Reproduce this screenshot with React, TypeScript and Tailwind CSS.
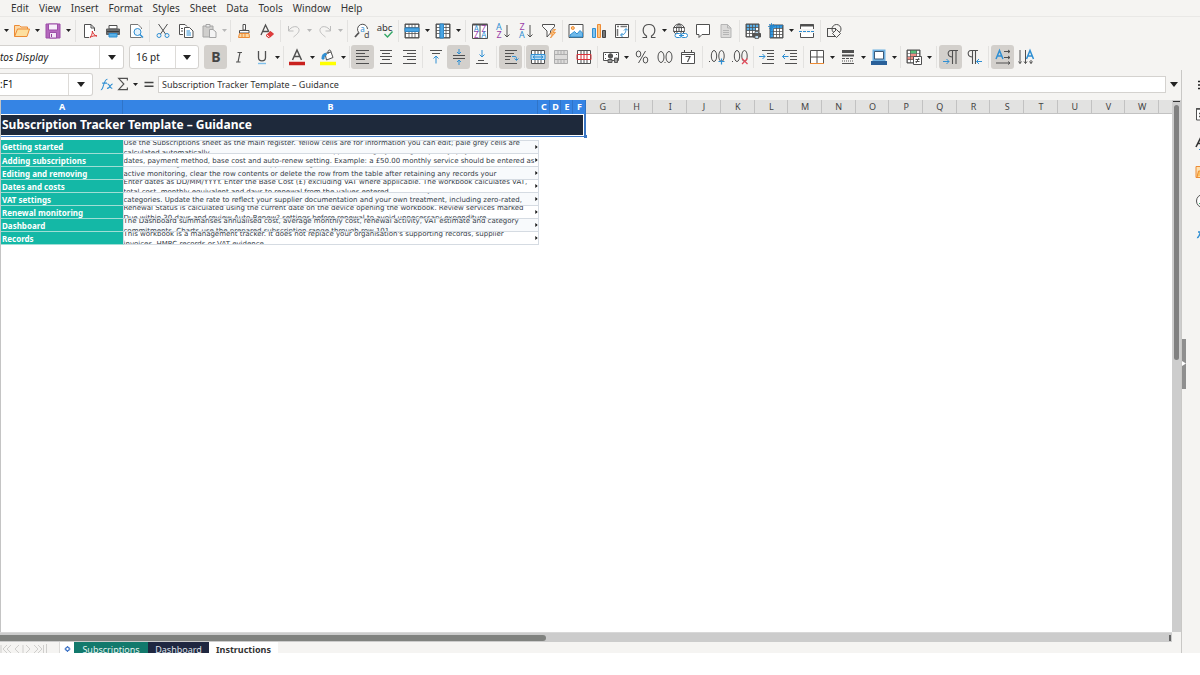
import type { ReactNode } from "react";

const INK = "#505050";
const BLUE = "#2f8fd3";
const ORANGE = "#ed8b34";

function Icon({ children, size = 16 }: { children: ReactNode; size?: number }) {
  return (
    <svg className="overflow-visible" width={size} height={size} viewBox="0 0 16 16" fill="none" stroke={INK} strokeWidth="1" aria-hidden="true">
      {children}
    </svg>
  );
}

function Glyph({ x, y, size, fill, children, weight, family }: { x: number; y: number; size: number; fill: string; children: string; weight?: string; family?: string }) {
  return (
    <text x={x} y={y} fontSize={size} fill={fill} stroke="none" textAnchor="middle" fontWeight={weight} fontFamily={family ?? "Noto Sans, sans-serif"}>
      {children}
    </text>
  );
}

const gridLines = "M1 1.5H15M1 4.5H15M1 7.5H15M1 10.5H15M1 14.5H15M1.5 1V15M5 1V15M8 1V15M11 1V15M14.5 1V15";

const icons: Record<string, ReactNode> = {
  open: (
    <Icon>
      <path d="M.5 13.5V2.5H5.5L7 4H13.5V6" fill="#fbd9a8" stroke={ORANGE} />
      <path d="M.6 13.5 3.5 6H15.5L13 13.5Z" fill="#fddf9f" stroke={ORANGE} />
    </Icon>
  ),
  save: (
    <Icon>
      <path d="M1 1H15V15H1Z" fill="#b468bd" stroke="#9d4fa8" />
      <path d="M3.5 1H12.5V7H3.5Z" fill="#f7effa" stroke="#9d4fa8" />
      <path d="M4.5 9.5H11.5V15H4.5Z" fill="#f4e7f7" stroke="#9d4fa8" />
      <path d="M6.5 11V14" stroke="#8f3d9a" />
    </Icon>
  ),
  pdf: (
    <Icon>
      <path d="M7 14.5H2.5V1.5H9L12.5 5V8" fill="#fff" />
      <path d="M9 1.5V5H12.5" />
      <path d="M8 14.5C10 12 10.5 10 10.3 8C11 11 12.5 12.5 15 13C12.5 12.5 10 13 8 14.5Z" stroke="#dc3232" />
    </Icon>
  ),
  print: (
    <Icon>
      <path d="M4 2.5H12V6H4Z" fill="#fff" />
      <path d="M1.500 6H14.500V11.500H1.500Z" fill="#6b6e71" stroke="#5f5f5f" />
      <path d="M2 8.5H14" stroke="#3b3b3b" />
      <path d="M4 10.5H12V14H4Z" fill="#5bb1e6" stroke={BLUE} />
    </Icon>
  ),
  preview: (
    <Icon>
      <path d="M13.500 14.5H2.500V1.500H10L13.500 5V6" fill="#fff" stroke="#777" />
      <circle cx="9.500" cy="9" r="3.500" fill="#e5f3fc" stroke={BLUE} />
      <path d="M12 11.500 15 14.500" stroke={BLUE} strokeWidth="1.500" />
    </Icon>
  ),
  cut: (
    <Icon>
      <path d="M3.500 1 10.500 11M12.500 1 5.500 11" />
      <circle cx="4" cy="12.500" r="2" stroke={BLUE} />
      <circle cx="12" cy="12.500" r="2" stroke={BLUE} />
    </Icon>
  ),
  copy: (
    <Icon>
      <path d="M5 11.500H1.500V1.500H7L9 3.500" fill="#fff" />
      <path d="M3 5.500H5M3 8H5" />
      <path d="M6.500 4.500H11.500L15 8V14.500H6.500Z" fill="#fff" />
      <path d="M8.500 8H12M8.500 10H13M8.500 12H13" stroke={BLUE} />
    </Icon>
  ),
  paste: (
    <Icon>
      <path d="M2 3H12V14H2Z" fill="#d0cfcd" stroke="#a5a5a5" />
      <path d="M5 1.500H9V4H5Z" fill="#eee" stroke="#a5a5a5" />
      <path d="M8.500 6.500H12L15 9V14.500H8.500Z" fill="#f4f4f4" stroke="#a5a5a5" />
    </Icon>
  ),
  brush: (
    <Icon>
      <path d="M7 1.500H9.500V7H7Z" fill="#fff" />
      <path d="M3.500 7.500H13V10H3.500Z" fill="#fff" />
      <path d="M3.500 10.500H13L13.500 14.500H2.500Z" fill="#fcd9a4" stroke={ORANGE} />
      <path d="M6 11V14M9 11V14" stroke={ORANGE} />
    </Icon>
  ),
  clear: (
    <Icon>
      <path d="M2 12 6.500 2 10 9M3.500 8.500H9" strokeWidth="1.300" />
      <path d="M7 12.500 11.500 8.500 14.500 11 10 15Z" fill="#e23c3c" stroke="#d43030" />
      <path d="M8 12 10.500 14.200" stroke="#fff" />
    </Icon>
  ),
  undo: (
    <Icon>
      <path d="M2.500 3V8H7.500M2.500 8C5 3 12 2 13 6.500C13.500 9.500 10 12 7.500 14" stroke="#bdbdbd" />
    </Icon>
  ),
  redo: (
    <Icon>
      <path d="M13.500 3V8H8.500M13.500 8C11 3 4 2 3 6.500C2.500 9.500 6 12 8.500 14" stroke="#bdbdbd" />
    </Icon>
  ),
  find: (
    <Icon>
      <path d="M5 9.500 1 14" strokeWidth="1.800" />
      <path d="M5 9.800A5 5 0 1 1 13.500 6" fill="#fff" />
      <Glyph x={8.500} y={8.500} size={8} fill={BLUE}>a</Glyph>
      <Glyph x={12.800} y={15} size={9} fill={INK}>d</Glyph>
    </Icon>
  ),
  spell: (
    <Icon>
      <Glyph x={7.500} y={7.500} size={9.500} fill="#333">abc</Glyph>
      <path d="M7.500 11 10.500 14 15.500 8.500" stroke="#32a866" strokeWidth="1.400" />
    </Icon>
  ),
  row: (
    <Icon>
      <path d="M1 1H15V15H1Z" fill="#fff" />
      <path d={gridLines} strokeWidth=".8" />
      <path d="M1 5H15V8.500H1Z" fill="#4ba6e4" stroke="#2e86c6" />
    </Icon>
  ),
  column: (
    <Icon>
      <path d="M1 1H15V15H1Z" fill="#fff" />
      <path d={gridLines} strokeWidth=".8" />
      <path d="M5 1H8.500V15H5Z" fill="#4ba6e4" stroke="#2e86c6" />
    </Icon>
  ),
  sort: (
    <Icon>
      <path d="M.500 1.500H15.500V15.500H.500ZM8 1.500V15.500" fill="#fff" />
      <path d="M.500 1.500H15.500" strokeWidth="2" />
      <Glyph x={4.300} y={8.500} size={8} fill={BLUE}>A</Glyph>
      <Glyph x={4.300} y={15} size={8} fill="#9b3fa8">Z</Glyph>
      <Glyph x={11.800} y={8.500} size={8} fill="#9b3fa8">Z</Glyph>
      <Glyph x={11.800} y={15} size={8} fill={BLUE}>A</Glyph>
    </Icon>
  ),
  az: (
    <Icon>
      <Glyph x={4} y={7} size={9} fill={BLUE}>A</Glyph>
      <Glyph x={4} y={15} size={9} fill="#9b3fa8">Z</Glyph>
      <path d="M12 2V14M9.500 11.500 12 14 14.500 11.500" />
    </Icon>
  ),
  za: (
    <Icon>
      <Glyph x={4} y={7} size={9} fill="#9b3fa8">Z</Glyph>
      <Glyph x={4} y={15} size={9} fill={BLUE}>A</Glyph>
      <path d="M12 2V14M9.500 11.500 12 14 14.500 11.500" />
    </Icon>
  ),
  filter: (
    <Icon>
      <path d="M1.500 1.500H13.500V3.500L9.500 8V10L6 14V8L1.500 3.500Z" fill="#fafafa" />
      <path d="M12.500 6.500 9 11H11.500L9.500 15 14.500 9.500H12L14.500 6.500Z" fill="#fbc583" stroke={ORANGE} strokeWidth=".8" />
    </Icon>
  ),
  image: (
    <Icon>
      <path d="M1 1.500H15V14.500H1Z" fill="#fff" />
      <path d="M2 14V12L6.500 8.500 9 11 12 7.500 14.500 10V14Z" fill="#6fb9ea" stroke={BLUE} />
      <circle cx="4.800" cy="5" r="1.500" fill="#fbc583" stroke={ORANGE} />
    </Icon>
  ),
  chart: (
    <Icon>
      <path d="M1.500 5.500H4.500V14.500H1.500Z" fill="#83c3ee" stroke={BLUE} />
      <path d="M6.500 1.500H9.500V14.500H6.500Z" fill="#fbc583" stroke={ORANGE} />
      <path d="M11.500 7.500H14.500V14.500H11.500Z" fill="#777" stroke="#444" />
    </Icon>
  ),
  pivot: (
    <Icon>
      <path d="M1.500 1.500H14.500V14.500H1.500Z" fill="#fff" />
      <path d="M3 3.500H5M6.500 3.500H13M3.500 6V13" stroke="#777" strokeWidth="1.500" />
      <path d="M7 12C10 12 12 10 12 6M10 7.500 12 5.500 14 7.500M8.500 10 6.500 12 8.500 14" stroke={BLUE} />
    </Icon>
  ),
  omega: (
    <Icon>
      <path d="M1.500 14.500H5.500V13C.5 10 1 1.500 8 1.500S15.500 10 10.500 13V14.500H14.500" strokeWidth="1.200" />
    </Icon>
  ),
  link: (
    <Icon>
      <circle cx="7" cy="6.500" r="5.500" fill="#fff" />
      <ellipse cx="7" cy="6.500" rx="2.500" ry="5.500" />
      <path d="M1.500 4.500H12.500M1.500 8.500H12.500M7 1V9" />
      <rect x="3" y="10.500" width="6.500" height="4" rx="2" fill="#fff" stroke={BLUE} />
      <rect x="9" y="10.500" width="6.500" height="4" rx="2" fill="#fff" stroke={BLUE} />
      <path d="M7 12.500H12" stroke={BLUE} />
    </Icon>
  ),
  comment: (
    <Icon>
      <path d="M1.500 1.500H14.500V11.500H7L4 14.500V11.500H1.500Z" fill="#fff" />
    </Icon>
  ),
  header: (
    <Icon>
      <path d="M3 1.500H9.500L13 5V14.500H3Z" fill="#dcdbda" stroke="#b5b5b5" />
      <path d="M9.500 1.500V5H13M5 7.500H11M5 9.500H11M5 11.500H11" stroke="#b5b5b5" />
    </Icon>
  ),
  printarea: (
    <Icon>
      <path d="M1 1H14V14H1Z" fill="#fff" />
      <path d="M1 1H14V4.500H1ZM1 4.500H11V8H1Z" fill="#5aaee6" stroke="none" />
      <path d="M1 1.500H14M1 4.500H14M1 7.500H14M1 10.500H8M1 13.500H8M1.500 1V14M4.500 1V14M7.500 1V14M10.500 1V10M13.500 1V8" strokeWidth=".8" />
      <path d="M8 10.500H15.500V14H8Z" fill="#555" />
      <path d="M10 8.500H13.500V10.500H10ZM10 12.500H13.500V15.500H10Z" fill="#b9dcf4" strokeWidth=".8" />
    </Icon>
  ),
  freeze: (
    <Icon>
      <path d="M2 2H15V15H2Z" fill="#fff" />
      <path d="M2 2H15V5H5V15H2Z" fill="#379be0" stroke="none" />
      <path d="M5 5.500H15M5 8.500H15M5 11.500H15M2 14.500H15M5.500 5V15M8.500 5V15M11.500 5V15M14.500 2V15" strokeWidth=".8" />
      <path d="M2 2.500H15M2.500 2V15M8.500 2V5M11.500 2V5M2 8.500H5M2 11.500H5" stroke="#2374b4" strokeWidth=".8" />
      <path d="M3.500 0V7M0 3.500H7M1 1 6 6M6 1 1 6" stroke="#2585cc" strokeWidth=".8" />
    </Icon>
  ),
  split: (
    <Icon>
      <path d="M1.500 6V1.500H14.500V6M1.500 10V14.500H14.500V10" fill="#fff" />
      <path d="M1 2.500H15" strokeWidth="2" />
      <path d="M0 8.500H16" stroke={BLUE} strokeDasharray="3 1" />
    </Icon>
  ),
  shapes: (
    <Icon>
      <rect x="1.500" y="5.500" width="8" height="8" />
      <circle cx="10.500" cy="6" r="4.500" />
      <path d="M10.500 6.500 14.500 10.500 10.500 14.500 6.500 10.500Z" fill="#f5f4f2" />
    </Icon>
  ),
  bold: (
    <Icon>
      <Glyph x={8} y={13} size={14} fill="#454545" weight="700">B</Glyph>
    </Icon>
  ),
  italic: (
    <Icon>
      <path d="M6.500 3.500H11M5 13H9.500M9 3.500 7 13" strokeWidth="1.200" />
    </Icon>
  ),
  underline: (
    <Icon>
      <path d="M4.500 2V8.500C4.500 13 11.500 13 11.500 8.500V2" strokeWidth="1.300" />
      <path d="M4 14.500H12" stroke="#7fc0ec" strokeWidth="1.400" />
    </Icon>
  ),
  fontcolor: (
    <Icon>
      <path d="M3.500 11 8 1 12.500 11M5.200 7.500H10.800" strokeWidth="1.500" />
      <path d="M0 14.500H16" stroke="#c9211e" strokeWidth="3.500" />
    </Icon>
  ),
  highlight: (
    <Icon>
      <path d="M5 4.500 11 3 13 8.500 6.500 11Z" fill="#fff" />
      <path d="M8 5V2.500C8.500 .500 11 .500 11 3" />
      <path d="M2 10C2 6 3 4.500 6 4.500L6.500 6C4.500 6.500 4 8 4 10Z" fill={BLUE} stroke={BLUE} />
      <path d="M0 14.500H16" stroke="#ffff00" strokeWidth="3.500" />
    </Icon>
  ),
  left: (
    <Icon>
      <path d="M1 1.500H14M1 4.500H10M1 7.500H14M1 10.500H10M1 14.500H14" />
    </Icon>
  ),
  center: (
    <Icon>
      <path d="M2 1.500H14M4 4.500H12M2 7.500H14M4 10.500H12M2 14.500H14" />
    </Icon>
  ),
  right: (
    <Icon>
      <path d="M2 1.500H15M6 4.500H15M2 7.500H15M6 10.500H15M2 14.500H15" />
    </Icon>
  ),
  vtop: (
    <Icon>
      <path d="M2 1.500H14M4 4.500H12" />
      <path d="M8 14.500V7M5.500 9.500 8 7 10.500 9.500" stroke={BLUE} />
    </Icon>
  ),
  vmid: (
    <Icon>
      <path d="M2 6.500H14M2 9.500H14" />
      <path d="M8 0V5M6 3 8 5 10 3M8 16V11M6 13 8 11 10 13" stroke={BLUE} />
    </Icon>
  ),
  vbottom: (
    <Icon>
      <path d="M2 14.500H14M4 11.500H10" />
      <path d="M8 1V8M5.500 5.500 8 8 10.500 5.500" stroke={BLUE} />
    </Icon>
  ),
  wrap: (
    <Icon>
      <path d="M2 1.500H14M2 4.500H11M2 7.500H8M2 10.500H7M2 14.500H14" />
      <path d="M9 7.500H12C13.500 7.500 13.500 8.500 13.500 11M11.500 9.500 13.500 11.500 15.500 9.500" stroke={BLUE} />
    </Icon>
  ),
  merge: (
    <Icon>
      <path d="M1.500 1.500H14.500V14.500H1.500ZM5 1.500V5M8 1.500V5M11 1.500V5M5 11V14.500M8 11V14.500M11 11V14.500" fill="#fff" />
      <path d="M1 5.500H15V10.500H1Z" fill="#b9dcf4" stroke={BLUE} />
      <path d="M3 8H13M5 6.500 3 8 5 9.500M11 6.500 13 8 11 9.500" stroke={BLUE} />
    </Icon>
  ),
  mergecells: (
    <Icon>
      <path d="M1.500 1.500H14.500V14.500H1.500ZM1.500 5.500H14.500M1.500 10.500H14.500M5 1.500V5M8 1.500V5M11 1.500V5M5 11V14.500M8 11V14.500M11 11V14.500" fill="#dddcdb" stroke="#adadad" />
    </Icon>
  ),
  splitcells: (
    <Icon>
      <path d="M1.500 1.500H14.500V14.500H1.500ZM5 1.500V5M8 1.500V5M11 1.500V5M5 11V14.500M8 11V14.500M11 11V14.500" fill="#fff" />
      <path d="M1 5.500H15V10.500H1ZM5 5.500V10.500M8 5.500V10.500M11 5.500V10.500" stroke="#d8323a" />
    </Icon>
  ),
  currency: (
    <Icon>
      <path d="M.500 3.500H15.500V11.500H.500Z" fill="#fff" />
      <circle cx="7.500" cy="7" r="2.200" fill="#555" />
      <path d="M2 5.500H3M2 9.500H3M13 5.500H14" />
      <path d="M5 10.500H9V13.500H5ZM11.500 9H14.500V13.500H11.500Z" fill="#999" stroke="#555" />
    </Icon>
  ),
  percent: (
    <Icon>
      <ellipse cx="4.500" cy="5" rx="2.300" ry="3" />
      <ellipse cx="11.500" cy="11" rx="2.300" ry="3" />
      <path d="M11.500 2 4.500 14" />
    </Icon>
  ),
  number: (
    <Icon>
      <ellipse cx="4" cy="8" rx="3" ry="5.500" />
      <ellipse cx="12" cy="8" rx="3" ry="5.500" />
      <path d="M7.500 13.500H8.500" />
    </Icon>
  ),
  date: (
    <Icon>
      <path d="M1.500 3.500H14.500V14.500H1.500ZM1.500 5.500H14.500M4.500 1V4M11.500 1V4" fill="#fff" />
      <path d="M5.500 7.500H10L7.500 13" strokeWidth="1.200" />
    </Icon>
  ),
  adddec: (
    <Icon>
      <path d="M0 12.500H1" />
      <ellipse cx="5" cy="7" rx="2.700" ry="5.500" />
      <ellipse cx="12.500" cy="7" rx="2.700" ry="5.500" />
      <path d="M12.500 9.500V15.500M9.500 12.500H15.500" stroke={BLUE} strokeWidth="1.200" />
    </Icon>
  ),
  deldec: (
    <Icon>
      <path d="M0 12.500H1" />
      <ellipse cx="5" cy="7" rx="2.700" ry="5.500" />
      <ellipse cx="12.500" cy="7" rx="2.700" ry="5.500" />
      <path d="M10 9.500 15.500 15M15.500 9.500 10 15" stroke="#e04a5a" strokeWidth="1.200" />
    </Icon>
  ),
  indent: (
    <Icon>
      <path d="M3 1.500H15M8 4.500H15M8 7.500H15M8 10.500H15M3 14.500H15" />
      <path d="M0 7.500H6M3.500 5 6 7.500 3.500 10" stroke={BLUE} />
    </Icon>
  ),
  outdent: (
    <Icon>
      <path d="M3 1.500H15M8 4.500H15M8 7.500H15M8 10.500H15M3 14.500H15" />
      <path d="M.500 7.500H6.500M3 5 .500 7.500 3 10" stroke={BLUE} />
    </Icon>
  ),
  borders: (
    <Icon>
      <path d="M1.500 14.500V1.500H14.500V14.500M8 1.500V14.500M1.500 8H14.500" fill="#fff" />
      <path d="M1 14.500H15" stroke={ORANGE} />
    </Icon>
  ),
  linestyle: (
    <Icon>
      <path d="M2 2.500H14" strokeWidth="3" />
      <path d="M2 6.500H14" strokeWidth="2" />
      <path d="M2 9.500H14" strokeDasharray="3 1" />
      <path d="M2 12H14" strokeDasharray="1 1" />
      <path d="M2 14.500H14" />
    </Icon>
  ),
  bordercolor: (
    <Icon>
      <path d="M2.500 1.500H13.500V11H2.500Z" fill="#fff" stroke="#6fb1e2" strokeWidth="2" />
      <path d="M3.500 2.500H12.500V10H3.500Z" stroke="#3c5a78" />
      <path d="M0 14H16" stroke="#2a6099" strokeWidth="4" />
    </Icon>
  ),
  conditional: (
    <Icon>
      <path d="M1 1H14V14H1Z" fill="#fff" />
      <path d="M4 1H11V4.500H4Z" fill="#57c07a" stroke="none" />
      <path d="M4 5H11V8H4ZM1 8H7V11H1Z" fill="#ef8f86" stroke="none" />
      <path d="M1 1.500H14M1 4.500H14M1 7.500H14M1 10.500H7M1 13.500H7M1.500 1V14M4.500 1V14M10.500 1V7M13.500 1V7" strokeWidth=".6" />
      <path d="M7.500 7.500H15.500V15.500H7.500ZM9.500 10.500H13.500M9.500 12.500H13.500M13 9 10 14" fill="#fff" />
    </Icon>
  ),
  ltr: (
    <Icon>
      <path d="M9.500 15V1.500M13 15V1.500M15 1.500H8C4 1.500 4 8 9.500 8" strokeWidth="1.100" />
      <path d="M0 12.500H6M3.500 10 6 12.500 3.500 15" stroke={BLUE} />
    </Icon>
  ),
  rtl: (
    <Icon>
      <path d="M6.500 15V1.500M9.500 15V1.500M12 1.500H5C1 1.500 1 8 6.500 8" strokeWidth="1.100" />
      <path d="M16 12.500H10.500M13 10 10.500 12.500 13 15" stroke={BLUE} />
    </Icon>
  ),
  horizontal: (
    <Icon>
      <path d="M1 10 4.500 1.500 8 10M2.500 7H6.500" stroke={BLUE} strokeWidth="1.500" />
      <path d="M9 2.500H15M9 8.500H15M1 14H15M13 1 15 2.500 13 4M13 7 15 8.500 13 10M13 12.500 15 14 13 15.500" />
    </Icon>
  ),
  vertical: (
    <Icon>
      <path d="M8.500 10 12 1.500 15.500 10M10 7H14" stroke={BLUE} strokeWidth="1.500" />
      <path d="M2 1V14.500M7.500 1V14.500M13 11V14.500M.500 12.500 2 14.500 3.500 12.500M6 12.500 7.500 14.500 9 12.500M11.500 12.500 13 14.500 14.500 12.500" />
    </Icon>
  ),
};

type Tool = { k: "b"; icon: string; label: string; on?: boolean } | { k: "d"; faint?: boolean; label: string } | { k: "s"; wide?: boolean };
const b = (icon: string, label: string, on?: boolean): Tool => ({ k: "b", icon, label, on });
const d = (label: string, faint?: boolean): Tool => ({ k: "d", label, faint });
const s = (wide?: boolean): Tool => ({ k: "s", wide });

const standardTools: Tool[] = [
  d("New options"), b("open", "Open"), d("Open options"), b("save", "Save"), d("Save options"), s(true),
  b("pdf", "Export as PDF"), b("print", "Print"), b("preview", "Print preview"), s(),
  b("cut", "Cut"), b("copy", "Copy"), b("paste", "Paste"), d("Paste options", true), s(),
  b("brush", "Clone formatting"), b("clear", "Clear formatting"), s(),
  b("undo", "Undo"), d("Undo history", true), b("redo", "Redo"), d("Redo history", true), s(true),
  b("find", "Find and replace"), b("spell", "Spelling"), s(),
  b("row", "Row"), d("Row options"), b("column", "Column"), d("Column options"), s(true),
  b("sort", "Sort"), b("az", "Sort ascending"), b("za", "Sort descending"), b("filter", "AutoFilter"), s(),
  b("image", "Insert image"), b("chart", "Insert chart"), b("pivot", "Pivot table"), s(),
  b("omega", "Special character"), d("Special character options"), b("link", "Hyperlink"), b("comment", "Comment"), b("header", "Headers and footers"), s(),
  b("printarea", "Define print area"), b("freeze", "Freeze rows and columns"), d("Freeze options"), b("split", "Split window"), s(),
  b("shapes", "Draw functions"),
];

const formatTools: Tool[] = [
  b("bold", "Bold", true), b("italic", "Italic"), b("underline", "Underline"), d("Underline options"), s(),
  b("fontcolor", "Font color"), d("Font color options"), b("highlight", "Background color"), d("Background color options"), s(),
  b("left", "Align left", true), b("center", "Align center"), b("right", "Align right"), s(),
  b("vtop", "Align top"), b("vmid", "Center vertically", true), b("vbottom", "Align bottom"), s(true),
  b("wrap", "Wrap text", true), s(),
  b("merge", "Merge and center", true), b("mergecells", "Merge cells"), b("splitcells", "Split cells"), s(),
  b("currency", "Currency"), d("Currency options"), b("percent", "Percent"), b("number", "Number"), b("date", "Date"), s(true),
  b("adddec", "Add decimal place"), b("deldec", "Delete decimal place"), s(),
  b("indent", "Increase indent"), b("outdent", "Decrease indent"), s(),
  b("borders", "Borders"), d("Border options"), b("linestyle", "Border style"), d("Border style options"), b("bordercolor", "Border color"), d("Border color options"), s(),
  b("conditional", "Conditional formatting"), d("Conditional options"), s(true),
  b("ltr", "Left to right", true), b("rtl", "Right to left"), s(true),
  b("horizontal", "Horizontal text", true), b("vertical", "Vertical text"),
];

function Caret({ faint, big }: { faint?: boolean; big?: boolean }) {
  return (
    <svg width={big ? 8 : 5} height={big ? 5 : 3} viewBox="0 0 8 4" preserveAspectRatio="none" fill={faint ? "#b8b8b8" : "#222"} aria-hidden="true">
      <path d="M0 0H8L4 4Z" />
    </svg>
  );
}

function Tools({ items }: { items: Tool[] }) {
  return (
    <div className="flex items-center">
      {items.map((t, i) => {
        if (t.k === "s")
          return (
            <span key={i} className={t.wide ? "flex w-1.5 shrink-0 justify-center" : "flex w-1 shrink-0 justify-center"}>
              <span className="h-[22px] w-px bg-[#e3e2e0]" />
            </span>
          );
        if (t.k === "d")
          return (
            <button key={i} type="button" aria-label={t.label} className="flex h-6 w-2 shrink-0 items-center justify-center">
              <Caret faint={t.faint} />
            </button>
          );
        return (
          <button
            key={i}
            type="button"
            aria-label={t.label}
            className={`flex h-6 w-[23px] shrink-0 items-center justify-center rounded-[3px] ${t.on ? "bg-[#d3d0cc]" : ""}`}
          >
            {icons[t.icon]}
          </button>
        );
      })}
    </div>
  );
}

const menus = ["Edit", "View", "Insert", "Format", "Styles", "Sheet", "Data", "Tools", "Window", "Help"];
const selectedColumns = ["A", "B", "C", "D", "E", "F"];
const columns = ["G", "H", "I", "J", "K", "L", "M", "N", "O", "P", "Q", "R", "S", "T", "U", "V", "W"];

const guidance: { topic: string; lines: string[] }[] = [
  {
    topic: "Getting started",
    lines: ["Use the Subscriptions sheet as the main register. Yellow cells are for information you can edit; pale grey cells are", "calculated automatically."],
  },
  {
    topic: "Adding subscriptions",
    lines: [
      "Enter each service on the next available row. Include the supplier, category, billing frequency, payment and renewal",
      "dates, payment method, base cost and auto-renew setting. Example: a £50.00 monthly service should be entered as",
      "50.00 with a Monthly cost",
    ],
  },
  {
    topic: "Editing and removing",
    lines: [
      "Edit the existing row when a service or supplier changes. To remove a",
      "active monitoring, clear the row contents or delete the row from the table after retaining any records your",
      "business needs.",
    ],
  },
  {
    topic: "Dates and costs",
    lines: ["Enter dates as DD/MM/YYYY. Enter the Base Cost (£) excluding VAT where applicable. The workbook calculates VAT,", "total cost, monthly equivalent and days to renewal from the values entered."],
  },
  {
    topic: "VAT settings",
    lines: [
      "The VAT rate is a common value for all rows where VAT is due on services, and can vary across cost",
      "categories. Update the rate to reflect your supplier documentation and your own treatment, including zero-rated,",
      "exempt or reverse cases.",
    ],
  },
  {
    topic: "Renewal monitoring",
    lines: ["Renewal Status is calculated using the current date on the device opening the workbook. Review services marked", "Due within 30 days and review Auto-Renew? settings before renewal to avoid unnecessary expenditure."],
  },
  {
    topic: "Dashboard",
    lines: ["The Dashboard summarises annualised cost, average monthly cost, renewal activity, VAT estimate and category", "commitments. Charts use the prepared subscription range through row 101."],
  },
  {
    topic: "Records",
    lines: ["This workbook is a management tracker. It does not replace your organisation's supporting records, supplier", "invoices, HMRC records or VAT evidence."],
  },
];

function Sheet() {
  return (
    <div className="min-w-0 flex-1 overflow-hidden border-l border-[#c4c4c4] bg-white">
      <table className="w-full table-fixed border-collapse">
        <colgroup>
          <col className="w-[122px]" />
          <col className="w-[415px]" />
          <col className="w-3" />
          <col className="w-[11px]" />
          <col className="w-3" />
          <col className="w-[13px]" />
          {columns.map((c) => (
            <col key={c} />
          ))}
          <col className="w-[13px]" />
        </colgroup>
        <thead>
          <tr className="h-3.5">
            {selectedColumns.map((c) => (
              <th key={c} scope="col" className="bg-[#3584e4] p-0 text-[9px] leading-[14px] font-bold text-white shadow-[inset_-1px_0_#2f74c8]">
                {c}
              </th>
            ))}
            {columns.map((c) => (
              <th key={c} scope="col" className="bg-[#e2e2e1] p-0 text-[9px] leading-[14px] font-normal text-[#444] shadow-[inset_-1px_-1px_#c2c2c2]">
                {c}
              </th>
            ))}
            <th className="bg-[#e2e2e1] p-0 shadow-[inset_0_-1px_#c2c2c2]" />
          </tr>
        </thead>
        <tbody>
          <tr>
            <td colSpan={6} className="p-0">
              <div className="relative border-r-2 border-b border-[#3a76c4] bg-white py-px pr-px">
                <div className="h-5 bg-[#1e293b] pl-px text-[12px] leading-5 font-bold text-white">Subscription Tracker Template – Guidance</div>
                <span className="absolute -right-[3px] -bottom-[2px] size-[3px] bg-[#3a76c4]" />
              </div>
            </td>
          </tr>
          <tr className="h-[3px]">
            <td colSpan={6} className="p-0" />
          </tr>
          {guidance.map((g, i) => (
            <tr key={g.topic}>
              <th scope="row" className="border-b border-[#9fded5] bg-[#14b8a6] p-0 pt-0.5 pl-px text-left text-[8px] leading-[10px] font-bold whitespace-nowrap text-white">
                {g.topic}
              </th>
              <td className={`border border-[#d5dbe2] p-0 ${i % 2 === 0 ? "bg-[#f8fafc]" : "bg-white"}`}>
                <div className="relative flex h-3 flex-col justify-center overflow-hidden pt-0.5 font-['DejaVu_Sans',sans-serif] text-[7px] leading-[10px] whitespace-nowrap text-[#333b46]">
                  {g.lines.map((line) => (
                    <span key={line} className="block shrink-0">
                      {line}
                    </span>
                  ))}
                  <svg className="absolute top-1 right-0" width="3" height="4" viewBox="0 0 3 5" fill="#111" aria-hidden="true">
                    <path d="M0 0 3 2.500 0 5Z" />
                  </svg>
                </div>
              </td>
            </tr>
          ))}
        </tbody>
      </table>
    </div>
  );
}

function Sidebar() {
  return (
    <aside className="flex w-[18px] shrink-0 overflow-hidden bg-[#f5f4f2]">
      <div className="flex w-1 shrink-0 flex-col justify-center pt-1">
        <button type="button" aria-label="Hide sidebar" className="flex h-[50px] items-center bg-[#8f8f8f]">
          <svg width="4" height="5" viewBox="0 0 4 5" fill="#fff" aria-hidden="true">
            <path d="M0 0 4 2.500 0 5Z" />
          </svg>
        </button>
      </div>
      <nav aria-label="Sidebar decks" className="ml-2.5 flex shrink-0 flex-col gap-[13px] pt-[7px]">
        <button type="button" aria-label="Sidebar settings">
          <Icon>
            <path d="M2 4.500H14M2 8H14M2 11.500H14" stroke="#222" strokeWidth="1.300" />
          </Icon>
        </button>
        <button type="button" aria-label="Properties">
          <Icon>
            <path d="M.500 2.500H15.500V14H.500Z" fill="#fff" />
            <path d="M0 3H16M3 7.500H6M3 10.500H6" strokeWidth="1.300" />
          </Icon>
        </button>
        <button type="button" aria-label="Styles">
          <Icon>
            <path d="M0 12 5 2 9 12M2 8.500H7" stroke="#333" strokeWidth="1.600" />
            <path d="M3 14.500H10" stroke={BLUE} />
          </Icon>
        </button>
        <button type="button" aria-label="Gallery">
          <Icon>
            <path d="M0 2.500H15V13.500H0Z" fill="#fde0b0" stroke={ORANGE} />
            <path d="M1 13 2.500 7H15" fill="#fbc25f" stroke={ORANGE} />
          </Icon>
        </button>
        <button type="button" aria-label="Navigator">
          <Icon>
            <circle cx="7" cy="8" r="6.500" fill="#fff" />
            <path d="M3 11 10 5" stroke="#32a866" />
          </Icon>
        </button>
        <button type="button" aria-label="Functions">
          <Icon>
            <path d="M1 15.500C4 16.500 4 6 8 6M2 10H7" stroke={BLUE} strokeWidth="1.500" />
          </Icon>
        </button>
      </nav>
    </aside>
  );
}

export default function App() {
  return (
    <div className="h-screen overflow-hidden bg-white pb-[22px] font-['Noto_Sans',sans-serif]">
      <div className="flex h-full flex-col overflow-hidden bg-[#f5f4f2]">
        <nav aria-label="Menu" className="flex h-[17px] shrink-0 items-center gap-2.5 border-b border-[#e9e8e6] pl-[11px] text-[10px] leading-4 text-[#333]">
          {menus.map((m) => (
            <button key={m} type="button">
              {m}
            </button>
          ))}
        </nav>

        <div className="flex h-[27px] shrink-0 items-center pl-0.5">
          <Tools items={standardTools} />
        </div>

        <div className="flex h-[26px] shrink-0 items-center text-[10px] text-[#222]">
          <div className="flex h-6 w-[124px] shrink-0 items-stretch overflow-hidden rounded-r-[3px] border border-l-0 border-[#d4d2cf] bg-white">
            <input aria-label="Font name" defaultValue="tos Display" className="w-[99px] min-w-0 italic outline-none" />
            <button type="button" aria-label="Choose font" className="flex flex-1 items-center justify-center border-l border-[#dddbd8]">
              <Caret big />
            </button>
          </div>
          <div className="mr-[5px] ml-[5px] flex h-6 w-[70px] shrink-0 items-stretch overflow-hidden rounded-[3px] border border-[#d4d2cf] bg-white">
            <input aria-label="Font size" defaultValue="16 pt" className="w-[45px] min-w-0 pl-1.5 outline-none" />
            <button type="button" aria-label="Choose font size" className="flex flex-1 items-center justify-center border-l border-[#dddbd8]">
              <Caret big />
            </button>
          </div>
          <Tools items={formatTools} />
        </div>

        <div className="flex min-h-0 flex-1">
          <div className="flex min-w-0 flex-1 flex-col border-r border-[#c9c8c6]">
            <div className="flex h-[30px] shrink-0 items-center pb-0.5 text-[10px] text-[#222]">
              <div className="flex h-[23px] w-[93px] shrink-0 items-stretch overflow-hidden rounded-r-[3px] border border-l-0 border-[#d4d2cf] bg-white">
                <input aria-label="Name box" defaultValue=":F1" className="w-[68px] min-w-0 outline-none" />
                <button type="button" aria-label="Choose range" className="flex flex-1 items-center justify-center border-l border-[#dddbd8]">
                  <Caret big />
                </button>
              </div>
              <div className="ml-1.5 flex items-center">
                <button type="button" aria-label="Function wizard" className="flex w-4 justify-center">
                  <Icon size={14}>
                    <path d="M1 14.500C4 15.500 4 2 8.500 2.500M2.500 7H8M8.500 8C11 7 11 13.500 14 13M14.500 8C12 8 11 13.500 8 13" stroke={BLUE} strokeWidth="1.200" />
                  </Icon>
                </button>
                <button type="button" aria-label="Select function" className="flex w-4 justify-center">
                  <Icon size={14}>
                    <path d="M13 4V1.500H3L9 8 3 14.500H13V12" strokeWidth="1.300" />
                  </Icon>
                </button>
                <button type="button" aria-label="Function options" className="flex w-2 justify-center">
                  <Caret />
                </button>
                <button type="button" aria-label="Formula" className="flex w-[19px] justify-center">
                  <Icon size={12}>
                    <path d="M2 6H14M2 11H14" stroke="#444" strokeWidth="1.800" />
                  </Icon>
                </button>
              </div>
              <input
                aria-label="Formula input"
                defaultValue="Subscription Tracker Template – Guidance"
                className="h-[17px] min-w-0 flex-1 border border-[#d4d2cf] bg-white pl-[3px] text-[9px] text-[#333] outline-none"
              />
              <button type="button" aria-label="Expand formula bar" className="flex w-[15px] shrink-0 justify-center">
                <Caret big />
              </button>
            </div>

            <div className="flex min-h-0 flex-1">
              <Sheet />
              <div className="flex w-[9px] shrink-0 flex-col items-center bg-[#cdcdcd] pt-px">
                <span className="h-px w-[7px] bg-[#333]" />
                <div className="mt-[3px] h-[48%] w-[5px] rounded-full bg-[#808080]" />
              </div>
            </div>

            <div className="flex h-2.5 shrink-0 pr-[9px]">
              <div className="flex flex-1 items-center justify-between border-t border-[#d8d8d8] bg-[#cccccc]">
                <div className="h-[6px] w-[46.600%] rounded-r-full bg-[#80827f]" />
                <span className="mr-px h-1.5 w-0.5 bg-[#666]" />
              </div>
            </div>

            <div className="flex h-[11px] shrink-0 overflow-hidden text-[9px] leading-[15px]">
              <div className="flex w-[74px] shrink-0 items-start justify-between">
                <svg width="48" height="12" viewBox="0 0 48 12" fill="none" stroke="#cfcecc" aria-hidden="true">
                  <path d="M1 3V11M7 3 3 7 7 11M11 3 7 7 11 11M19 3 15 7 19 11M23 3V11M26 3 30 7 26 11M34 3 38 7 34 11M38 3 42 7 38 11M43.500 3V11M46.500 2V12" />
                </svg>
                <button type="button" aria-label="Add sheet" className="flex w-[15px] justify-center border-l border-[#dcdbd9] bg-white">
                  <svg width="9" height="12" viewBox="0 0 9 12" fill="none" aria-hidden="true">
                    <circle cx="4.500" cy="7" r="1.800" stroke="#3f74c6" strokeWidth="1.300" />
                    <path d="M4.500 4V5M4.500 9V10M1.500 7H2.500M6.500 7H7.500" stroke="#3f74c6" />
                  </svg>
                </button>
              </div>
              <button type="button" className="w-[74px] shrink-0 bg-[#12796c] text-[#e4f4f1]">Subscriptions</button>
              <button type="button" className="w-[61px] shrink-0 bg-[#1f2740] text-[#dfe2ea]">Dashboard</button>
              <button type="button" className="w-[69px] shrink-0 bg-white font-bold text-[#333]">Instructions</button>
            </div>
          </div>
          <Sidebar />
        </div>
      </div>
    </div>
  );
}
